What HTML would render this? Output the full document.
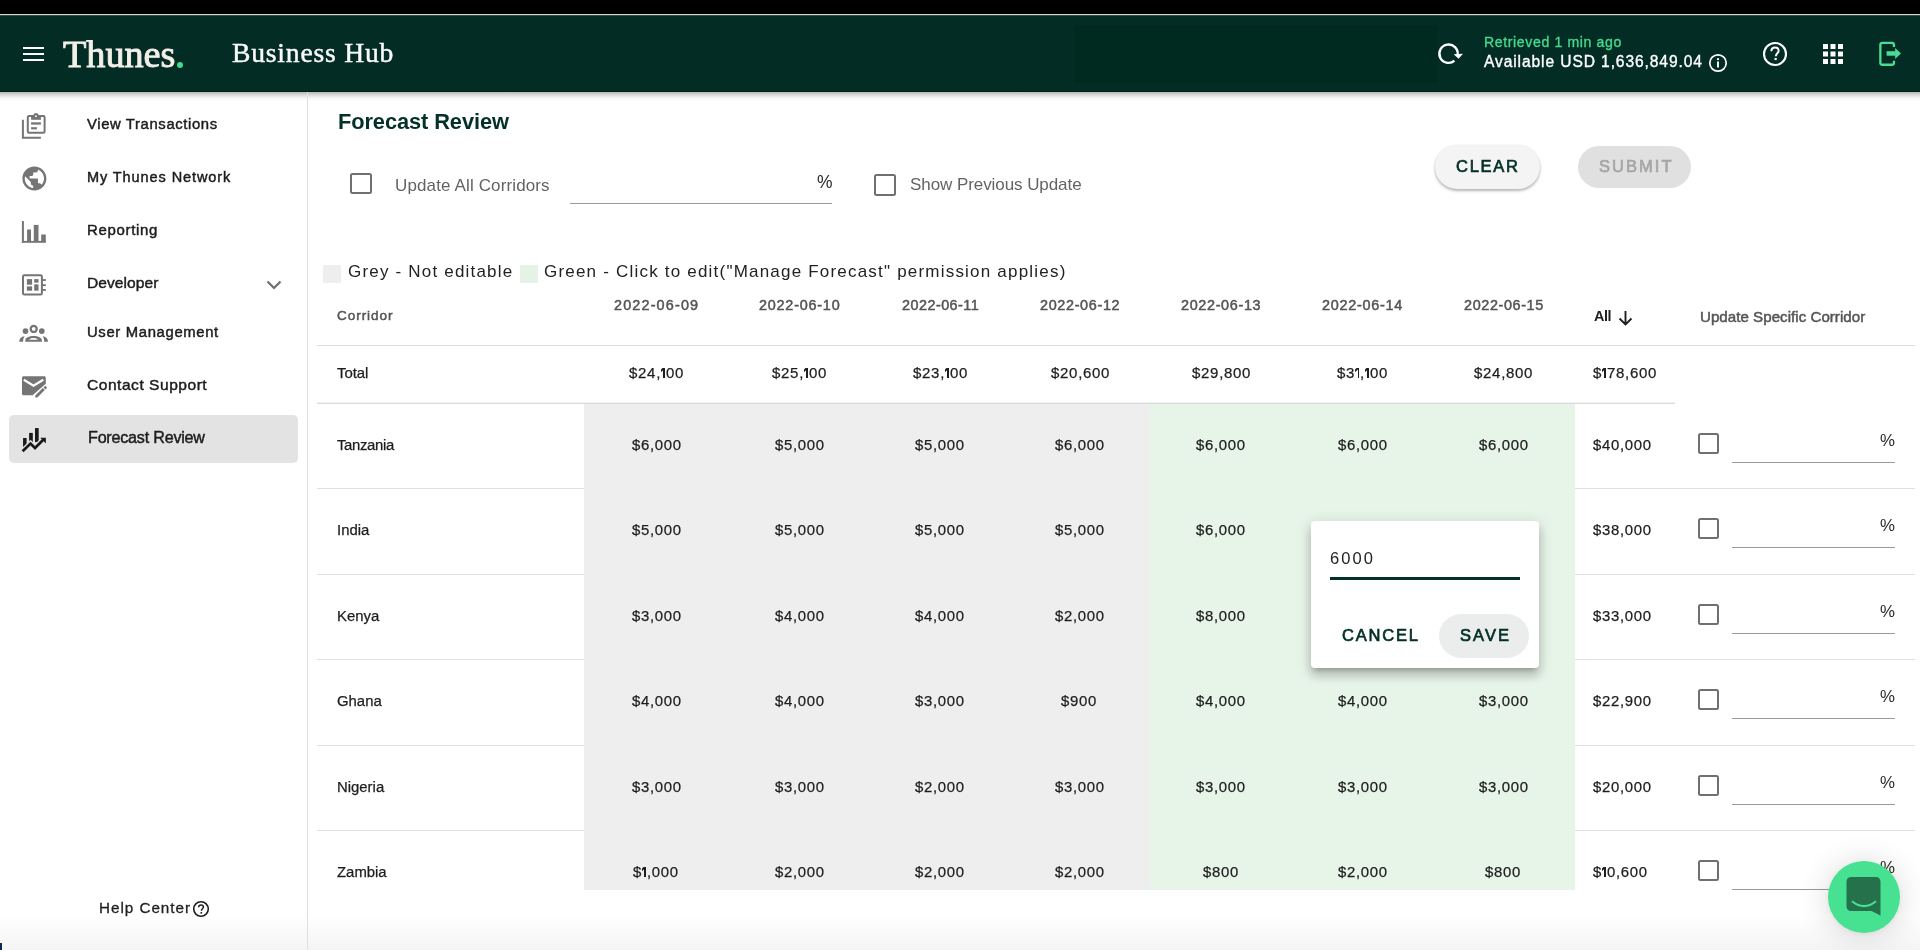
<!DOCTYPE html>
<html><head><meta charset="utf-8"><style>
html,body{margin:0;padding:0;}
body{width:1920px;height:950px;overflow:hidden;position:relative;background:#fff;font-family:"Liberation Sans",sans-serif;}
.t{position:absolute;white-space:nowrap;line-height:1;will-change:transform;}
.r{position:absolute;}
.one{display:inline-block;position:relative;width:4.1px;height:10.4px;margin-left:0.1px;margin-right:0.8px;color:transparent;overflow:hidden;letter-spacing:0;-webkit-text-stroke:0 !important;vertical-align:baseline}
.one::before{content:'';position:absolute;right:0;top:0;bottom:0;width:1.75px;background:#1e1e1e}
.one::after{content:'';position:absolute;left:-0.2px;top:1.9px;width:4.6px;height:1.7px;background:#1e1e1e;transform:rotate(-42deg);transform-origin:0 100%}
</style></head><body>
<div class="r" style="left:0px;top:0px;width:1920px;height:14px;background:#000;"></div>
<div class="r" style="left:0px;top:14px;width:1920px;height:1px;background:#d4d4d4;"></div>
<div class="r" style="left:0px;top:15px;width:1920px;height:77px;background:#022c24;z-index:5"></div>
<div class="r" style="left:0px;top:15px;width:1920px;height:1px;background:#2f4f48;z-index:5"></div>
<div class="r" style="left:0px;top:91px;width:1920px;height:1px;background:#001d16;z-index:5"></div>
<div class="r" style="left:0px;top:92px;width:1920px;height:9px;background:linear-gradient(#bcbcbc,#c2c2c2 12%,#e0e0e0 40%,#f6f6f6 70%,rgba(255,255,255,0));z-index:5"></div>
<div class="r" style="left:1074px;top:25px;width:364px;height:58px;background:#00291f;z-index:6"></div>
<div class="r" style="left:23px;top:47px;width:21.4px;height:2.2px;background:#fff;z-index:6"></div>
<div class="r" style="left:23px;top:53px;width:21.4px;height:2.2px;background:#fff;z-index:6"></div>
<div class="r" style="left:23px;top:59px;width:21.4px;height:2.2px;background:#fff;z-index:6"></div>
<div class="t" style="left:63.00px;top:35.32px;font-size:38.30px;font-weight:400;color:#f3efe9;letter-spacing:-0.059px;font-family:'Liberation Serif', serif;-webkit-text-stroke:0.9px #f3efe9;z-index:6">Thunes</div>
<div class="r" style="left:176.5px;top:61.5px;width:6.5px;height:6.5px;background:#44d98f;border-radius:50%;z-index:6"></div>
<div class="t" style="left:232.00px;top:39.09px;font-size:27.60px;font-weight:400;color:#fafafa;letter-spacing:0.797px;font-family:'Liberation Serif', serif;-webkit-text-stroke:0.45px #fafafa;z-index:6">Business Hub</div>
<svg class="r" style="left:1436px;top:41px;z-index:6" width="28" height="26" viewBox="0 0 28 26"><path d="M18.4 19.8 A9.2 9.2 0 1 1 21.7 13.8" fill="none" stroke="#fff" stroke-width="2.4"/><path d="M17.6 13.2 L27 12.8 L22.6 17.8 Z" fill="#fff"/></svg>
<div class="t" style="left:1484.00px;top:34.97px;font-size:14.10px;font-weight:400;color:#46d98e;letter-spacing:0.623px;font-family:'Liberation Sans', sans-serif;-webkit-text-stroke:0.35px #46d98e;z-index:6">Retrieved 1 min ago</div>
<div class="t" style="left:1484.00px;top:53.99px;font-size:15.60px;font-weight:400;color:#ffffff;letter-spacing:0.892px;font-family:'Liberation Sans', sans-serif;-webkit-text-stroke:0.35px #ffffff;z-index:6">Available USD 1,636,849.04</div>
<svg class="r" style="left:1708px;top:52.8px;z-index:6" width="20" height="20" viewBox="0 0 20 20"><circle cx="10" cy="10" r="8.2" fill="none" stroke="#fff" stroke-width="1.7"/><rect x="9.05" y="8.5" width="1.9" height="6" fill="#fff"/><rect x="9.05" y="5.2" width="1.9" height="1.9" fill="#fff"/></svg>
<svg class="r" style="left:1762px;top:41px;z-index:6" width="26" height="26" viewBox="0 0 26 26"><circle cx="13" cy="13" r="11" fill="none" stroke="#fff" stroke-width="2.1"/><path d="M9.4 10.2 C9.4 7.9 11 6.6 13 6.6 C15 6.6 16.6 7.9 16.6 9.9 C16.6 12.3 13.9 12.4 13.9 15.2" fill="none" stroke="#fff" stroke-width="2"/><rect x="12.5" y="16.9" width="2.2" height="2.2" fill="#fff"/></svg>
<svg class="r" style="left:1823px;top:43.8px;z-index:6" width="20" height="20" viewBox="0 0 20 20"><rect x="0.0" y="0.0" width="5" height="5" fill="#fff"/><rect x="0.0" y="7.5" width="5" height="5" fill="#fff"/><rect x="0.0" y="15.0" width="5" height="5" fill="#fff"/><rect x="7.5" y="0.0" width="5" height="5" fill="#fff"/><rect x="7.5" y="7.5" width="5" height="5" fill="#fff"/><rect x="7.5" y="15.0" width="5" height="5" fill="#fff"/><rect x="15.0" y="0.0" width="5" height="5" fill="#fff"/><rect x="15.0" y="7.5" width="5" height="5" fill="#fff"/><rect x="15.0" y="15.0" width="5" height="5" fill="#fff"/></svg>
<svg class="r" style="left:1878px;top:41px;z-index:6" width="24" height="26" viewBox="0 0 24 26"><path d="M15.95 6 V3.85 Q15.95 1.85 13.95 1.85 H4.35 Q2.35 1.85 2.35 3.85 V21.75 Q2.35 23.75 4.35 23.75 H13.95 Q15.95 23.75 15.95 21.75 V19.8" fill="none" stroke="#4ade94" stroke-width="2.3"/><rect x="8.6" y="10.2" width="9" height="4.5" fill="#4ade94"/><path d="M17.1 7.1 L23 12.5 L17.1 18 Z" fill="#4ade94"/></svg>
<div class="r" style="left:307px;top:92px;width:1px;height:858px;background:#e0e0e0;z-index:6"></div>
<div class="r" style="left:9px;top:415px;width:289px;height:48px;background:#e3e3e3;border-radius:5px"></div>
<div class="t" style="left:87.30px;top:117.05px;font-size:14.83px;font-weight:400;color:#1c1c1c;letter-spacing:0.630px;font-family:'Liberation Sans', sans-serif;-webkit-text-stroke:0.45px #1c1c1c;">View Transactions</div>
<div class="t" style="left:87.40px;top:170.20px;font-size:14.53px;font-weight:400;color:#1c1c1c;letter-spacing:0.908px;font-family:'Liberation Sans', sans-serif;-webkit-text-stroke:0.45px #1c1c1c;">My Thunes Network</div>
<div class="t" style="left:87.40px;top:223.23px;font-size:14.97px;font-weight:400;color:#1c1c1c;letter-spacing:0.688px;font-family:'Liberation Sans', sans-serif;-webkit-text-stroke:0.45px #1c1c1c;">Reporting</div>
<div class="t" style="left:87.40px;top:275.43px;font-size:15.55px;font-weight:400;color:#1c1c1c;letter-spacing:0.060px;font-family:'Liberation Sans', sans-serif;-webkit-text-stroke:0.45px #1c1c1c;">Developer</div>
<div class="t" style="left:87.10px;top:324.65px;font-size:14.83px;font-weight:400;color:#1c1c1c;letter-spacing:0.661px;font-family:'Liberation Sans', sans-serif;-webkit-text-stroke:0.45px #1c1c1c;">User Management</div>
<div class="t" style="left:87.10px;top:376.73px;font-size:15.55px;font-weight:400;color:#1c1c1c;letter-spacing:0.524px;font-family:'Liberation Sans', sans-serif;-webkit-text-stroke:0.45px #1c1c1c;">Contact Support</div>
<div class="t" style="left:87.50px;top:429.14px;font-size:16.13px;font-weight:400;color:#1c1c1c;letter-spacing:-0.214px;font-family:'Liberation Sans', sans-serif;-webkit-text-stroke:0.45px #1c1c1c;">Forecast Review</div>
<svg class="r" style="left:18px;top:110px;" width="32" height="32" viewBox="0 0 32 32"><path d="M4.9 9.8 V27.8 H22.9" fill="none" stroke="#757575" stroke-width="2"/><rect x="9.8" y="6.05" width="16.8" height="16.7" rx="1.3" fill="none" stroke="#757575" stroke-width="2"/><rect x="13.1" y="6.5" width="9.8" height="3.3" fill="#757575"/><circle cx="18" cy="5.6" r="2.6" fill="#757575"/><circle cx="17.9" cy="6.2" r="0.9" fill="#fff"/><rect x="13.1" y="12.3" width="9.8" height="2.3" fill="#757575"/><rect x="13.1" y="17.2" width="5.8" height="2.2" fill="#757575"/></svg>
<svg class="r" style="left:19.6px;top:164.2px;" width="28.8" height="28.8" viewBox="0 0 24 24"><path fill="#757575" d="M12 2C6.48 2 2 6.48 2 12s4.48 10 10 10 10-4.48 10-10S17.52 2 12 2zm-1 17.93c-3.95-.49-7-3.85-7-7.93 0-.62.08-1.21.21-1.79L9 15v1c0 1.1.9 2 2 2v1.93zm6.9-2.54c-.26-.81-1-1.39-1.9-1.39h-1v-3c0-.55-.45-1-1-1H8v-2h2c.55 0 1-.45 1-1V7h2c1.1 0 2-.9 2-2v-.41c2.93 1.19 5 4.06 5 7.41 0 2.08-.8 3.97-2.1 5.39z"/></svg>
<svg class="r" style="left:18px;top:215px;" width="32" height="32" viewBox="0 0 32 32"><rect x="3.9" y="6.06" width="2" height="21.74" fill="#757575"/><rect x="3.9" y="25.9" width="23.9" height="1.9" fill="#757575"/><rect x="9.1" y="14.5" width="3.9" height="12" fill="#757575"/><rect x="15.8" y="9.9" width="4.7" height="17" fill="#757575"/><rect x="23.2" y="19.5" width="4.6" height="7.5" fill="#757575"/></svg>
<svg class="r" style="left:18px;top:268px;" width="32" height="32" viewBox="0 0 32 32"><rect x="5" y="7.2" width="18.9" height="19.25" rx="1.3" fill="none" stroke="#757575" stroke-width="2"/><rect x="8.9" y="11.1" width="5.2" height="5.6" fill="#757575"/><rect x="8.9" y="18.4" width="5.2" height="4.3" fill="#757575"/><rect x="16.2" y="11.1" width="4.3" height="3.55" fill="#757575"/><rect x="16.2" y="16.3" width="4.3" height="6.4" fill="#757575"/><rect x="24" y="11.1" width="3.8" height="1.9" fill="#757575"/><rect x="24" y="16.2" width="3.8" height="1.9" fill="#757575"/><rect x="24" y="21" width="3.8" height="1.9" fill="#757575"/></svg>
<svg class="r" style="left:16px;top:316px;" width="36" height="32" viewBox="0 0 36 32"><circle cx="17.7" cy="12.95" r="3" fill="none" stroke="#757575" stroke-width="2.3"/><circle cx="9.5" cy="15.1" r="2.85" fill="#757575"/><circle cx="25.8" cy="15.1" r="2.85" fill="#757575"/><path d="M9.3 25.8 V24.2 C9.3 21.5 13 19.9 17.6 19.9 C22.2 19.9 25.9 21.5 25.9 24.2 V25.8 Z M13.1 23.7 H21.9 C21.3 22.6 19.6 22 17.5 22 C15.4 22 13.7 22.6 13.1 23.7 Z" fill="#757575" fill-rule="evenodd"/><path d="M3.2 25.8 C3.2 22.8 5 20.6 8.7 20.2 C7.6 21.6 7.1 23 7.1 25.8 Z" fill="#757575"/><path d="M32 25.8 C32 22.8 30.2 20.6 26.6 20.2 C27.7 21.6 28.2 23 28.2 25.8 Z" fill="#757575"/></svg>
<svg class="r" style="left:18px;top:368px;" width="32" height="32" viewBox="0 0 32 32"><path d="M5.5 8.25 H26.3 C27.1 8.25 27.8 8.95 27.8 9.75 V15.7 L14.6 27.3 H5.5 C4.7 27.3 4 26.6 4 25.8 V9.75 C4 8.95 4.7 8.25 5.5 8.25 Z" fill="#757575"/><path d="M5.8 11.8 L15.5 17.8 L25.3 11.8" fill="none" stroke="#fff" stroke-width="2.2"/><path d="M17.3 29.6 L17.3 27.6 L24.8 20.1 L26.8 22.1 L19.3 29.6 Z" fill="#757575"/><path d="M25.5 19.4 L27.2 17.7 L29.2 19.7 L27.5 21.4 Z" fill="#757575"/></svg>
<svg class="r" style="left:18px;top:422px;" width="32" height="32" viewBox="0 0 32 32"><rect x="5.05" y="16" width="3.55" height="10" fill="#1a1a1a"/><rect x="11.1" y="10.9" width="3.7" height="12" fill="#1a1a1a"/><rect x="17" y="6.06" width="3.7" height="14" fill="#1a1a1a"/><path d="M4.6 29.2 L12.5 21.6 L17 26 L25.5 17.6" fill="none" stroke="#e3e3e3" stroke-width="5.6"/><path d="M4.6 29.2 L12.5 21.6 L17 26 L25.5 17.6" fill="none" stroke="#1a1a1a" stroke-width="2.8"/><path d="M22.3 15.8 H27.9 V21.4 Z" fill="#1a1a1a"/></svg>
<svg class="r" style="left:266px;top:280px;" width="16" height="11" viewBox="0 0 16 11"><path d="M1.5 1.5 L8 8 L14.5 1.5" fill="none" stroke="#6e6e6e" stroke-width="2.2"/></svg>
<div class="t" style="left:99.10px;top:899.78px;font-size:15.26px;font-weight:400;color:#1f1f1f;letter-spacing:0.968px;font-family:'Liberation Sans', sans-serif;-webkit-text-stroke:0.3px #1f1f1f;">Help Center</div>
<svg class="r" style="left:192px;top:899.5px;" width="18" height="18" viewBox="0 0 18 18"><circle cx="9" cy="9" r="7.3" fill="none" stroke="#1f1f1f" stroke-width="1.6"/><path d="M6.6 7.2 C6.6 5.8 7.6 4.9 9 4.9 C10.4 4.9 11.4 5.8 11.4 7 C11.4 8.7 9.4 8.7 9.4 10.8" fill="none" stroke="#1f1f1f" stroke-width="1.5"/><rect x="8.5" y="12" width="1.6" height="1.6" fill="#1f1f1f"/></svg>
<div class="t" style="left:338.00px;top:110.94px;font-size:21.80px;font-weight:700;color:#033028;letter-spacing:-0.081px;font-family:'Liberation Sans', sans-serif;">Forecast Review</div>
<div class="r" style="left:350px;top:172.8px;width:21.5px;height:21.5px;background:transparent;border:2.2px solid #707070;border-radius:2.5px;box-sizing:border-box"></div>
<div class="t" style="left:395.00px;top:177.00px;font-size:17.01px;font-weight:400;color:#636363;letter-spacing:0.131px;font-family:'Liberation Sans', sans-serif;">Update All Corridors</div>
<div class="r" style="left:570px;top:203px;width:262px;height:1.3px;background:#9a9a9a;"></div>
<div class="t" style="left:816.70px;top:173.94px;font-size:17.44px;font-weight:400;color:#2a2a2a;letter-spacing:0.000px;font-family:'Liberation Sans', sans-serif;">%</div>
<div class="r" style="left:874px;top:174px;width:21.5px;height:21.5px;background:transparent;border:2.2px solid #707070;border-radius:2.5px;box-sizing:border-box"></div>
<div class="t" style="left:910.00px;top:175.60px;font-size:17.01px;font-weight:400;color:#636363;letter-spacing:-0.070px;font-family:'Liberation Sans', sans-serif;">Show Previous Update</div>
<div class="r" style="left:1435px;top:145.3px;width:104.5px;height:43.3px;background:#f4f4f4;border-radius:22px;box-shadow:0 2px 3px rgba(0,0,0,0.28),0 0 2px rgba(0,0,0,0.08)"></div>
<div class="t" style="left:1456.00px;top:158.03px;font-size:16.50px;font-weight:400;color:#033028;letter-spacing:1.743px;font-family:'Liberation Sans', sans-serif;-webkit-text-stroke:0.7px #033028;">CLEAR</div>
<div class="r" style="left:1578px;top:146px;width:113px;height:42.2px;background:#e0e0e0;border-radius:22px"></div>
<div class="t" style="left:1599.00px;top:158.03px;font-size:16.50px;font-weight:400;color:#a6a6a6;letter-spacing:2.026px;font-family:'Liberation Sans', sans-serif;-webkit-text-stroke:0.7px #a6a6a6;">SUBMIT</div>
<div class="r" style="left:323.3px;top:265px;width:17.7px;height:17.7px;background:#eeeeee;"></div>
<div class="t" style="left:348.30px;top:263.31px;font-size:17.00px;font-weight:400;color:#222;letter-spacing:1.194px;font-family:'Liberation Sans', sans-serif;">Grey - Not editable</div>
<div class="r" style="left:520.2px;top:265px;width:17.7px;height:17.7px;background:#e4f3e6;"></div>
<div class="t" style="left:544.00px;top:263.31px;font-size:17.00px;font-weight:400;color:#222;letter-spacing:1.205px;font-family:'Liberation Sans', sans-serif;">Green - Click to edit("Manage Forecast" permission applies)</div>
<div class="t" style="left:337.00px;top:309.36px;font-size:13.52px;font-weight:400;color:#555555;letter-spacing:0.957px;font-family:'Liberation Sans', sans-serif;-webkit-text-stroke:0.5px #555555;">Corridor</div>
<div class="t" style="left:614.25px;top:298.01px;font-size:14.40px;font-weight:400;color:#555555;letter-spacing:1.160px;font-family:'Liberation Sans', sans-serif;-webkit-text-stroke:0.5px #555555;">2022-06-09</div>
<div class="t" style="left:759.45px;top:298.01px;font-size:14.40px;font-weight:400;color:#555555;letter-spacing:0.783px;font-family:'Liberation Sans', sans-serif;-webkit-text-stroke:0.5px #555555;">2022-06-10</div>
<div class="t" style="left:901.60px;top:298.01px;font-size:14.40px;font-weight:400;color:#555555;letter-spacing:0.469px;font-family:'Liberation Sans', sans-serif;-webkit-text-stroke:0.5px #555555;">2022-06-11</div>
<div class="t" style="left:1040.00px;top:298.01px;font-size:14.40px;font-weight:400;color:#555555;letter-spacing:0.660px;font-family:'Liberation Sans', sans-serif;-webkit-text-stroke:0.5px #555555;">2022-06-12</div>
<div class="t" style="left:1181.40px;top:298.01px;font-size:14.40px;font-weight:400;color:#555555;letter-spacing:0.660px;font-family:'Liberation Sans', sans-serif;-webkit-text-stroke:0.5px #555555;">2022-06-13</div>
<div class="t" style="left:1322.30px;top:298.01px;font-size:14.40px;font-weight:400;color:#555555;letter-spacing:0.727px;font-family:'Liberation Sans', sans-serif;-webkit-text-stroke:0.5px #555555;">2022-06-14</div>
<div class="t" style="left:1463.65px;top:298.01px;font-size:14.40px;font-weight:400;color:#555555;letter-spacing:0.627px;font-family:'Liberation Sans', sans-serif;-webkit-text-stroke:0.5px #555555;">2022-06-15</div>
<div class="t" style="left:1593.80px;top:309.11px;font-size:14.40px;font-weight:700;color:#1e1e1e;letter-spacing:-0.466px;font-family:'Liberation Sans', sans-serif;">All</div>
<svg class="r" style="left:1617px;top:310px;" width="17" height="16" viewBox="0 0 17 16"><path d="M8.5 1 V14.5 M2.5 8.5 L8.5 14.5 L14.5 8.5" fill="none" stroke="#1e1e1e" stroke-width="1.9"/></svg>
<div class="t" style="left:1699.70px;top:308.60px;font-size:15.12px;font-weight:400;color:#555555;letter-spacing:0.026px;font-family:'Liberation Sans', sans-serif;-webkit-text-stroke:0.5px #555555;">Update Specific Corridor</div>
<div class="r" style="left:317px;top:345px;width:1598px;height:1px;background:#dedede;"></div>
<div class="t" style="left:337.00px;top:365.63px;font-size:14.97px;font-weight:400;color:#1e1e1e;letter-spacing:-0.047px;font-family:'Liberation Sans', sans-serif;-webkit-text-stroke:0.25px #1e1e1e;">Total</div>
<div class="t" style="left:628.80px;top:364.90px;font-size:15.00px;color:#1e1e1e;letter-spacing:0.7px;-webkit-text-stroke:0.25px #1e1e1e">$24,<span class="one">1</span>00</div>
<div class="t" style="left:772.30px;top:364.90px;font-size:15.00px;color:#1e1e1e;letter-spacing:0.7px;-webkit-text-stroke:0.25px #1e1e1e">$25,<span class="one">1</span>00</div>
<div class="t" style="left:912.50px;top:364.90px;font-size:15.00px;color:#1e1e1e;letter-spacing:0.7px;-webkit-text-stroke:0.25px #1e1e1e">$23,<span class="one">1</span>00</div>
<div class="t" style="left:1050.55px;top:364.90px;font-size:15.00px;color:#1e1e1e;letter-spacing:0.7px;-webkit-text-stroke:0.25px #1e1e1e">$20,600</div>
<div class="t" style="left:1191.95px;top:364.90px;font-size:15.00px;color:#1e1e1e;letter-spacing:0.7px;-webkit-text-stroke:0.25px #1e1e1e">$29,800</div>
<div class="t" style="left:1336.65px;top:364.90px;font-size:15.00px;color:#1e1e1e;letter-spacing:0.7px;-webkit-text-stroke:0.25px #1e1e1e">$3<span class="one">1</span>,<span class="one">1</span>00</div>
<div class="t" style="left:1474.05px;top:364.90px;font-size:15.00px;color:#1e1e1e;letter-spacing:0.7px;-webkit-text-stroke:0.25px #1e1e1e">$24,800</div>
<div class="t" style="left:1592.70px;top:364.90px;font-size:15.00px;color:#1e1e1e;letter-spacing:0.7px;-webkit-text-stroke:0.25px #1e1e1e">$<span class="one">1</span>78,600</div>
<div class="r" style="left:317px;top:402px;width:1358px;height:1px;background:#f0f0f0;"></div>
<div class="r" style="left:317px;top:403px;width:1358px;height:1px;background:#dcdcdc;"></div>
<div class="r" style="left:584px;top:404px;width:566px;height:486px;background:#eeeeee;"></div>
<div class="r" style="left:1150px;top:404px;width:425px;height:486px;background:#e7f4e8;"></div>
<div class="t" style="left:337.00px;top:437.69px;font-size:14.90px;font-weight:400;color:#1e1e1e;letter-spacing:-0.339px;font-family:'Liberation Sans', sans-serif;-webkit-text-stroke:0.25px #1e1e1e;">Tanzania</div>
<div class="t" style="left:631.55px;top:437.69px;font-size:14.90px;color:#1e1e1e;letter-spacing:0.7px;-webkit-text-stroke:0.25px #1e1e1e">$6,000</div>
<div class="t" style="left:775.05px;top:437.69px;font-size:14.90px;color:#1e1e1e;letter-spacing:0.7px;-webkit-text-stroke:0.25px #1e1e1e">$5,000</div>
<div class="t" style="left:915.25px;top:437.69px;font-size:14.90px;color:#1e1e1e;letter-spacing:0.7px;-webkit-text-stroke:0.25px #1e1e1e">$5,000</div>
<div class="t" style="left:1055.05px;top:437.69px;font-size:14.90px;color:#1e1e1e;letter-spacing:0.7px;-webkit-text-stroke:0.25px #1e1e1e">$6,000</div>
<div class="t" style="left:1196.45px;top:437.69px;font-size:14.90px;color:#1e1e1e;letter-spacing:0.7px;-webkit-text-stroke:0.25px #1e1e1e">$6,000</div>
<div class="t" style="left:1337.65px;top:437.69px;font-size:14.90px;color:#1e1e1e;letter-spacing:0.7px;-webkit-text-stroke:0.25px #1e1e1e">$6,000</div>
<div class="t" style="left:1478.55px;top:437.69px;font-size:14.90px;color:#1e1e1e;letter-spacing:0.7px;-webkit-text-stroke:0.25px #1e1e1e">$6,000</div>
<div class="t" style="left:1592.70px;top:437.69px;font-size:14.90px;color:#1e1e1e;letter-spacing:0.7px;-webkit-text-stroke:0.25px #1e1e1e">$40,000</div>
<div class="r" style="left:1698px;top:432.7px;width:21px;height:21px;background:transparent;border:2.2px solid #707070;border-radius:2.5px;box-sizing:border-box"></div>
<div class="r" style="left:1732.4px;top:461.5px;width:162.4px;height:1.3px;background:#9a9a9a;"></div>
<div class="t" style="left:1880.00px;top:432.73px;font-size:16.86px;font-weight:400;color:#2a2a2a;letter-spacing:0.000px;font-family:'Liberation Sans', sans-serif;">%</div>
<div class="r" style="left:317px;top:488.0px;width:267px;height:1px;background:#e0e0e0;"></div>
<div class="r" style="left:1575px;top:488.0px;width:340px;height:1px;background:#e0e0e0;"></div>
<div class="t" style="left:337.00px;top:523.19px;font-size:14.90px;font-weight:400;color:#1e1e1e;letter-spacing:-0.000px;font-family:'Liberation Sans', sans-serif;-webkit-text-stroke:0.25px #1e1e1e;">India</div>
<div class="t" style="left:631.55px;top:523.19px;font-size:14.90px;color:#1e1e1e;letter-spacing:0.7px;-webkit-text-stroke:0.25px #1e1e1e">$5,000</div>
<div class="t" style="left:775.05px;top:523.19px;font-size:14.90px;color:#1e1e1e;letter-spacing:0.7px;-webkit-text-stroke:0.25px #1e1e1e">$5,000</div>
<div class="t" style="left:915.25px;top:523.19px;font-size:14.90px;color:#1e1e1e;letter-spacing:0.7px;-webkit-text-stroke:0.25px #1e1e1e">$5,000</div>
<div class="t" style="left:1055.05px;top:523.19px;font-size:14.90px;color:#1e1e1e;letter-spacing:0.7px;-webkit-text-stroke:0.25px #1e1e1e">$5,000</div>
<div class="t" style="left:1196.45px;top:523.19px;font-size:14.90px;color:#1e1e1e;letter-spacing:0.7px;-webkit-text-stroke:0.25px #1e1e1e">$6,000</div>
<div class="t" style="left:1592.70px;top:523.19px;font-size:14.90px;color:#1e1e1e;letter-spacing:0.7px;-webkit-text-stroke:0.25px #1e1e1e">$38,000</div>
<div class="r" style="left:1698px;top:518.2px;width:21px;height:21px;background:transparent;border:2.2px solid #707070;border-radius:2.5px;box-sizing:border-box"></div>
<div class="r" style="left:1732.4px;top:547.0px;width:162.4px;height:1.3px;background:#9a9a9a;"></div>
<div class="t" style="left:1880.00px;top:518.23px;font-size:16.86px;font-weight:400;color:#2a2a2a;letter-spacing:0.000px;font-family:'Liberation Sans', sans-serif;">%</div>
<div class="r" style="left:317px;top:573.55px;width:267px;height:1px;background:#e0e0e0;"></div>
<div class="r" style="left:1575px;top:573.55px;width:340px;height:1px;background:#e0e0e0;"></div>
<div class="t" style="left:337.00px;top:608.69px;font-size:14.90px;font-weight:400;color:#1e1e1e;letter-spacing:-0.000px;font-family:'Liberation Sans', sans-serif;-webkit-text-stroke:0.25px #1e1e1e;">Kenya</div>
<div class="t" style="left:631.55px;top:608.69px;font-size:14.90px;color:#1e1e1e;letter-spacing:0.7px;-webkit-text-stroke:0.25px #1e1e1e">$3,000</div>
<div class="t" style="left:775.05px;top:608.69px;font-size:14.90px;color:#1e1e1e;letter-spacing:0.7px;-webkit-text-stroke:0.25px #1e1e1e">$4,000</div>
<div class="t" style="left:915.25px;top:608.69px;font-size:14.90px;color:#1e1e1e;letter-spacing:0.7px;-webkit-text-stroke:0.25px #1e1e1e">$4,000</div>
<div class="t" style="left:1055.05px;top:608.69px;font-size:14.90px;color:#1e1e1e;letter-spacing:0.7px;-webkit-text-stroke:0.25px #1e1e1e">$2,000</div>
<div class="t" style="left:1196.45px;top:608.69px;font-size:14.90px;color:#1e1e1e;letter-spacing:0.7px;-webkit-text-stroke:0.25px #1e1e1e">$8,000</div>
<div class="t" style="left:1592.70px;top:608.69px;font-size:14.90px;color:#1e1e1e;letter-spacing:0.7px;-webkit-text-stroke:0.25px #1e1e1e">$33,000</div>
<div class="r" style="left:1698px;top:603.7px;width:21px;height:21px;background:transparent;border:2.2px solid #707070;border-radius:2.5px;box-sizing:border-box"></div>
<div class="r" style="left:1732.4px;top:632.5px;width:162.4px;height:1.3px;background:#9a9a9a;"></div>
<div class="t" style="left:1880.00px;top:603.73px;font-size:16.86px;font-weight:400;color:#2a2a2a;letter-spacing:0.000px;font-family:'Liberation Sans', sans-serif;">%</div>
<div class="r" style="left:317px;top:659.1px;width:267px;height:1px;background:#e0e0e0;"></div>
<div class="r" style="left:1575px;top:659.1px;width:340px;height:1px;background:#e0e0e0;"></div>
<div class="t" style="left:337.00px;top:694.19px;font-size:14.90px;font-weight:400;color:#1e1e1e;letter-spacing:-0.000px;font-family:'Liberation Sans', sans-serif;-webkit-text-stroke:0.25px #1e1e1e;">Ghana</div>
<div class="t" style="left:631.55px;top:694.19px;font-size:14.90px;color:#1e1e1e;letter-spacing:0.7px;-webkit-text-stroke:0.25px #1e1e1e">$4,000</div>
<div class="t" style="left:775.05px;top:694.19px;font-size:14.90px;color:#1e1e1e;letter-spacing:0.7px;-webkit-text-stroke:0.25px #1e1e1e">$4,000</div>
<div class="t" style="left:915.25px;top:694.19px;font-size:14.90px;color:#1e1e1e;letter-spacing:0.7px;-webkit-text-stroke:0.25px #1e1e1e">$3,000</div>
<div class="t" style="left:1061.35px;top:694.19px;font-size:14.90px;color:#1e1e1e;letter-spacing:0.7px;-webkit-text-stroke:0.25px #1e1e1e">$900</div>
<div class="t" style="left:1196.45px;top:694.19px;font-size:14.90px;color:#1e1e1e;letter-spacing:0.7px;-webkit-text-stroke:0.25px #1e1e1e">$4,000</div>
<div class="t" style="left:1337.65px;top:694.19px;font-size:14.90px;color:#1e1e1e;letter-spacing:0.7px;-webkit-text-stroke:0.25px #1e1e1e">$4,000</div>
<div class="t" style="left:1478.55px;top:694.19px;font-size:14.90px;color:#1e1e1e;letter-spacing:0.7px;-webkit-text-stroke:0.25px #1e1e1e">$3,000</div>
<div class="t" style="left:1592.70px;top:694.19px;font-size:14.90px;color:#1e1e1e;letter-spacing:0.7px;-webkit-text-stroke:0.25px #1e1e1e">$22,900</div>
<div class="r" style="left:1698px;top:689.2px;width:21px;height:21px;background:transparent;border:2.2px solid #707070;border-radius:2.5px;box-sizing:border-box"></div>
<div class="r" style="left:1732.4px;top:718.0px;width:162.4px;height:1.3px;background:#9a9a9a;"></div>
<div class="t" style="left:1880.00px;top:689.23px;font-size:16.86px;font-weight:400;color:#2a2a2a;letter-spacing:0.000px;font-family:'Liberation Sans', sans-serif;">%</div>
<div class="r" style="left:317px;top:744.65px;width:267px;height:1px;background:#e0e0e0;"></div>
<div class="r" style="left:1575px;top:744.65px;width:340px;height:1px;background:#e0e0e0;"></div>
<div class="t" style="left:337.00px;top:779.69px;font-size:14.90px;font-weight:400;color:#1e1e1e;letter-spacing:0.000px;font-family:'Liberation Sans', sans-serif;-webkit-text-stroke:0.25px #1e1e1e;">Nigeria</div>
<div class="t" style="left:631.55px;top:779.69px;font-size:14.90px;color:#1e1e1e;letter-spacing:0.7px;-webkit-text-stroke:0.25px #1e1e1e">$3,000</div>
<div class="t" style="left:775.05px;top:779.69px;font-size:14.90px;color:#1e1e1e;letter-spacing:0.7px;-webkit-text-stroke:0.25px #1e1e1e">$3,000</div>
<div class="t" style="left:915.25px;top:779.69px;font-size:14.90px;color:#1e1e1e;letter-spacing:0.7px;-webkit-text-stroke:0.25px #1e1e1e">$2,000</div>
<div class="t" style="left:1055.05px;top:779.69px;font-size:14.90px;color:#1e1e1e;letter-spacing:0.7px;-webkit-text-stroke:0.25px #1e1e1e">$3,000</div>
<div class="t" style="left:1196.45px;top:779.69px;font-size:14.90px;color:#1e1e1e;letter-spacing:0.7px;-webkit-text-stroke:0.25px #1e1e1e">$3,000</div>
<div class="t" style="left:1337.65px;top:779.69px;font-size:14.90px;color:#1e1e1e;letter-spacing:0.7px;-webkit-text-stroke:0.25px #1e1e1e">$3,000</div>
<div class="t" style="left:1478.55px;top:779.69px;font-size:14.90px;color:#1e1e1e;letter-spacing:0.7px;-webkit-text-stroke:0.25px #1e1e1e">$3,000</div>
<div class="t" style="left:1592.70px;top:779.69px;font-size:14.90px;color:#1e1e1e;letter-spacing:0.7px;-webkit-text-stroke:0.25px #1e1e1e">$20,000</div>
<div class="r" style="left:1698px;top:774.7px;width:21px;height:21px;background:transparent;border:2.2px solid #707070;border-radius:2.5px;box-sizing:border-box"></div>
<div class="r" style="left:1732.4px;top:803.5px;width:162.4px;height:1.3px;background:#9a9a9a;"></div>
<div class="t" style="left:1880.00px;top:774.73px;font-size:16.86px;font-weight:400;color:#2a2a2a;letter-spacing:0.000px;font-family:'Liberation Sans', sans-serif;">%</div>
<div class="r" style="left:317px;top:830.2px;width:267px;height:1px;background:#e0e0e0;"></div>
<div class="r" style="left:1575px;top:830.2px;width:340px;height:1px;background:#e0e0e0;"></div>
<div class="t" style="left:337.00px;top:865.19px;font-size:14.90px;font-weight:400;color:#1e1e1e;letter-spacing:0.000px;font-family:'Liberation Sans', sans-serif;-webkit-text-stroke:0.25px #1e1e1e;">Zambia</div>
<div class="t" style="left:633.30px;top:865.19px;font-size:14.90px;color:#1e1e1e;letter-spacing:0.7px;-webkit-text-stroke:0.25px #1e1e1e">$<span class="one">1</span>,000</div>
<div class="t" style="left:775.05px;top:865.19px;font-size:14.90px;color:#1e1e1e;letter-spacing:0.7px;-webkit-text-stroke:0.25px #1e1e1e">$2,000</div>
<div class="t" style="left:915.25px;top:865.19px;font-size:14.90px;color:#1e1e1e;letter-spacing:0.7px;-webkit-text-stroke:0.25px #1e1e1e">$2,000</div>
<div class="t" style="left:1055.05px;top:865.19px;font-size:14.90px;color:#1e1e1e;letter-spacing:0.7px;-webkit-text-stroke:0.25px #1e1e1e">$2,000</div>
<div class="t" style="left:1202.75px;top:865.19px;font-size:14.90px;color:#1e1e1e;letter-spacing:0.7px;-webkit-text-stroke:0.25px #1e1e1e">$800</div>
<div class="t" style="left:1337.65px;top:865.19px;font-size:14.90px;color:#1e1e1e;letter-spacing:0.7px;-webkit-text-stroke:0.25px #1e1e1e">$2,000</div>
<div class="t" style="left:1484.85px;top:865.19px;font-size:14.90px;color:#1e1e1e;letter-spacing:0.7px;-webkit-text-stroke:0.25px #1e1e1e">$800</div>
<div class="t" style="left:1592.70px;top:865.19px;font-size:14.90px;color:#1e1e1e;letter-spacing:0.7px;-webkit-text-stroke:0.25px #1e1e1e">$<span class="one">1</span>0,600</div>
<div class="r" style="left:1698px;top:860.2px;width:21px;height:21px;background:transparent;border:2.2px solid #707070;border-radius:2.5px;box-sizing:border-box"></div>
<div class="r" style="left:1732.4px;top:889.0px;width:162.4px;height:1.3px;background:#9a9a9a;"></div>
<div class="t" style="left:1880.00px;top:860.23px;font-size:16.86px;font-weight:400;color:#2a2a2a;letter-spacing:0.000px;font-family:'Liberation Sans', sans-serif;">%</div>
<div class="r" style="left:1311px;top:521px;width:228px;height:147px;background:#fff;border-radius:4px;box-shadow:0 5px 5px -3px rgba(0,0,0,.2),0 8px 10px 1px rgba(0,0,0,.14),0 3px 14px 2px rgba(0,0,0,.12);z-index:10"></div>
<div class="t" style="left:1330.00px;top:550.43px;font-size:16.50px;font-weight:400;color:#222;letter-spacing:2.096px;font-family:'Liberation Sans', sans-serif;z-index:11">6000</div>
<div class="r" style="left:1330px;top:577px;width:190px;height:2.6px;background:#033028;z-index:11"></div>
<div class="t" style="left:1342.00px;top:627.03px;font-size:16.50px;font-weight:400;color:#033028;letter-spacing:1.819px;font-family:'Liberation Sans', sans-serif;-webkit-text-stroke:0.7px #033028;z-index:11">CANCEL</div>
<div class="r" style="left:1439px;top:614.4px;width:90px;height:43.6px;background:#ebedec;border-radius:22px;z-index:11"></div>
<div class="t" style="left:1460.00px;top:627.03px;font-size:16.50px;font-weight:400;color:#033028;letter-spacing:2.061px;font-family:'Liberation Sans', sans-serif;-webkit-text-stroke:0.7px #033028;z-index:12">SAVE</div>
<div class="r" style="left:0px;top:943px;width:1.6px;height:7px;background:#0b2a52;z-index:4"></div>
<div class="r" style="left:0px;top:916px;width:1920px;height:34px;background:linear-gradient(rgba(243,243,243,0),#f4f4f4);z-index:3"></div>
<div class="r" style="left:1828px;top:860.5px;width:72px;height:72px;background:#46e191;border-radius:50%;box-shadow:0 1px 6px rgba(0,0,0,.06),0 2px 32px rgba(0,0,0,.16);z-index:20"></div>
<svg class="r" style="left:1846px;top:876px;z-index:21" width="36" height="42" viewBox="0 0 36 42"><path d="M5 1 H30 C32.5 1 34.5 3 34.5 5.5 V39.5 L25.5 35 H5 C2.5 35 0.5 33 0.5 30.5 V5.5 C0.5 3 2.5 1 5 1 Z" fill="#24714c"/><path d="M6 25.2 Q18 35 30 25.2" fill="none" stroke="#46e191" stroke-width="2.1"/></svg>
</body></html>
